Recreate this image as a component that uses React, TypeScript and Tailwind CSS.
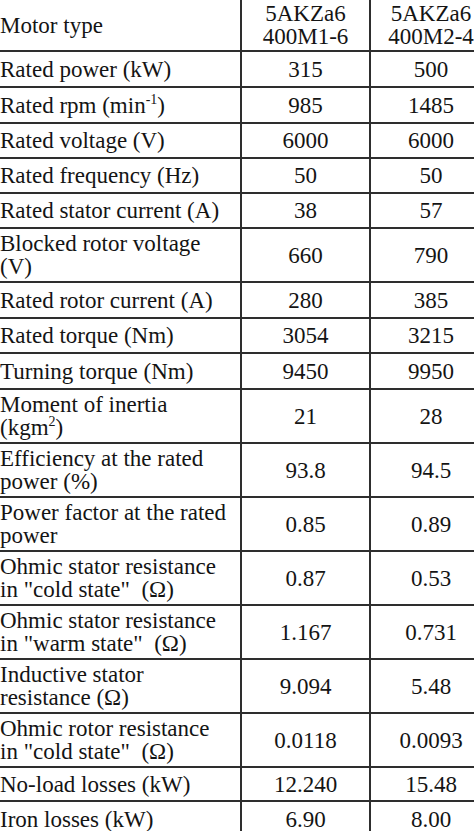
import React from "react";

type Row = { label: React.ReactNode; a: React.ReactNode; b: React.ReactNode; h: string };

const Sup = ({ children }: { children: React.ReactNode }) => (
  <sup className="text-[14px] leading-none relative -top-[9px] align-baseline">{children}</sup>
);

const rows: Row[] = [
  { label: "Rated power (kW)", a: "315", b: "500", h: "h-[36px]" },
  { label: <>Rated rpm (min<Sup>-1</Sup>)</>, a: "985", b: "1485", h: "h-[36px]" },
  { label: "Rated voltage (V)", a: "6000", b: "6000", h: "h-[35px]" },
  { label: "Rated frequency (Hz)", a: "50", b: "50", h: "h-[35px]" },
  { label: "Rated stator current (A)", a: "38", b: "57", h: "h-[35px]" },
  { label: <>Blocked rotor voltage<br />(V)</>, a: "660", b: "790", h: "h-[54px]" },
  { label: "Rated rotor current (A)", a: "280", b: "385", h: "h-[36px]" },
  { label: "Rated torque (Nm)", a: "3054", b: "3215", h: "h-[35px]" },
  { label: "Turning torque (Nm)", a: "9450", b: "9950", h: "h-[36px]" },
  { label: <>Moment of inertia<br />(kgm<Sup>2</Sup>)</>, a: "21", b: "28", h: "h-[54px]" },
  { label: <>Efficiency at the rated<br />power (%)</>, a: "93.8", b: "94.5", h: "h-[54px]" },
  { label: <>Power factor at the rated<br />power</>, a: "0.85", b: "0.89", h: "h-[54px]" },
  { label: <>Ohmic stator resistance<br />in "cold state"&nbsp; (Ω)</>, a: "0.87", b: "0.53", h: "h-[54px]" },
  { label: <>Ohmic stator resistance<br />in "warm state"&nbsp; (Ω)</>, a: "1.167", b: "0.731", h: "h-[54px]" },
  { label: <>Inductive stator<br />resistance (Ω)</>, a: "9.094", b: "5.48", h: "h-[54px]" },
  { label: <>Ohmic rotor resistance<br />in "cold state"&nbsp; (Ω)</>, a: "0.0118", b: "0.0093", h: "h-[54px]" },
  { label: "No-load losses (kW)", a: "12.240", b: "15.48", h: "h-[34px]" },
  { label: "Iron losses (kW)", a: "6.90", b: "8.00", h: "h-[34px]" },
];

function Line({ r, last }: { r: Row; last?: boolean }) {
  const bb = last ? "" : "border-b-2 border-[#2e2e2e]";
  return (
    <div className={`grid grid-cols-[242px_129px_120px] ${r.h} ${bb}`}>
      <div className="flex items-center border-r-2 border-[#2e2e2e] pl-0">
        <div>{r.label}</div>
      </div>
      <div className="flex items-center justify-center border-r-2 border-[#2e2e2e]">{r.a}</div>
      <div className="flex items-center justify-center">{r.b}</div>
    </div>
  );
}

export default function App() {
  return (
    <div
      className="w-[474px] h-[831px] overflow-hidden bg-white text-[#141414] text-[23px] leading-[23px]"
      style={{ fontFamily: '"Liberation Serif", "Times New Roman", serif' }}
    >
      <div className="w-[491px]">
        <div className="grid grid-cols-[242px_129px_120px] h-[52px] border-b-2 border-[#2e2e2e]">
          <div className="flex items-center border-r-2 border-[#2e2e2e]">Motor type</div>
          <div className="flex flex-col items-center justify-center border-r-2 border-[#2e2e2e] text-center">
            <div>5AKZa6</div>
            <div>400M1-6</div>
          </div>
          <div className="flex flex-col items-center justify-center text-center">
            <div>5AKZa6</div>
            <div>400M2-4</div>
          </div>
        </div>
        {rows.map((r, i) => (
          <Line key={i} r={r} last={i === rows.length - 1} />
        ))}
      </div>
    </div>
  );
}
